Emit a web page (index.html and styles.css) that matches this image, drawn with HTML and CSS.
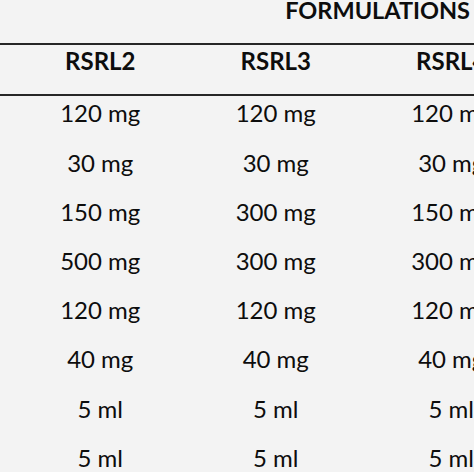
FILE: index.html
```html
<!DOCTYPE html>
<html>
<head>
<meta charset="utf-8">
<link rel="stylesheet" href="styles.css">
</head>
<body>
<div class="sheet">
  <div class="title">FORMULATIONS</div>
  <div class="row head">
    <div class="cell">RSRL2</div><div class="cell">RSRL3</div><div class="cell">RSRL4</div>
  </div>
  <div class="body">
    <div class="row"><div class="cell">120 mg</div><div class="cell">120 mg</div><div class="cell">120 mg</div></div>
    <div class="row"><div class="cell">30 mg</div><div class="cell">30 mg</div><div class="cell">30 mg</div></div>
    <div class="row"><div class="cell">150 mg</div><div class="cell">300 mg</div><div class="cell">150 mg</div></div>
    <div class="row"><div class="cell">500 mg</div><div class="cell">300 mg</div><div class="cell">300 mg</div></div>
    <div class="row"><div class="cell">120 mg</div><div class="cell">120 mg</div><div class="cell">120 mg</div></div>
    <div class="row"><div class="cell">40 mg</div><div class="cell">40 mg</div><div class="cell">40 mg</div></div>
    <div class="row"><div class="cell">5 ml</div><div class="cell">5 ml</div><div class="cell">5 ml</div></div>
    <div class="row"><div class="cell">5 ml</div><div class="cell">5 ml</div><div class="cell">5 ml</div></div>
  </div>
</div>
</body>
</html>
```

FILE: styles.css
```css
html, body {
  margin: 0;
  padding: 0;
  background: #ffffff;
}
body {
  width: 474px;
  height: 474px;
  overflow: hidden;
  font-family: Lato, "Open Sans", sans-serif;
  color: #0d0d0d;
}
.sheet {
  height: 472px;
  overflow: hidden;
  background: #f3f3f3;
}
.title {
  height: 45px;
  box-sizing: border-box;
  font-weight: 700;
  font-size: 23.5px;
  line-height: 21px;
  text-align: right;
  padding-right: 4px;
  border-bottom: 2px solid #262626;
  white-space: nowrap;
}
.row {
  display: grid;
  grid-template-columns: 175.5px 175.5px 175.5px;
  padding-left: 12.5px;
  width: 540px;
  box-sizing: border-box;
  height: 49.2px;
  font-size: 24px;
  line-height: 24px;
}
.cell {
  text-align: center;
  padding-top: 5.4px;
  white-space: nowrap;
}
.head {
  height: 51px;
  font-weight: 700;
  border-bottom: 2px solid #262626;
}
.head .cell {
  padding-top: 4.4px;
}
```
